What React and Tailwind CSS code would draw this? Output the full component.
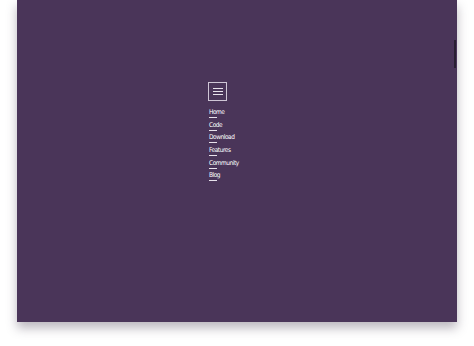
const links = ["Home", "Code", "Download", "Features", "Community", "Blog"];

export default function App() {
  return (
    <div className="h-[346px] w-[474px] bg-white px-[17px]">
      <div className="relative h-[322px] w-[440px] bg-[#4a3559] pl-[191px] pt-[82px] shadow-[0_6px_10px_rgba(60,50,70,0.35)] font-['DejaVu_Sans_Condensed','Liberation_Sans',sans-serif]">
        {/* menu toggle */}
        <div className="flex h-[19px] w-[19px] flex-col items-center justify-center gap-[2px] border border-[#cfc6d6]">
          <span className="h-px w-[10px] bg-[#e8e2ec]" />
          <span className="h-px w-[10px] bg-[#e8e2ec]" />
          <span className="h-px w-[10px] bg-[#e8e2ec]" />
        </div>

        <ul className="mt-[7px] flex flex-col pl-px">
          {links.map((l) => (
            <li key={l} className="flex h-[12.7px] flex-col">
              <a href="#" className="text-[6.5px] font-medium leading-[8px] tracking-[-0.45px] text-white">
                {l}
              </a>
              <span className="mt-[1px] h-px w-[8px] bg-[#e8e2ec]" />
            </li>
          ))}
        </ul>

        {/* scroll thumb */}
        <div className="absolute right-[1px] top-[40px] h-[28px] w-[2px] bg-[#2a1f33]" />
      </div>
    </div>
  );
}
